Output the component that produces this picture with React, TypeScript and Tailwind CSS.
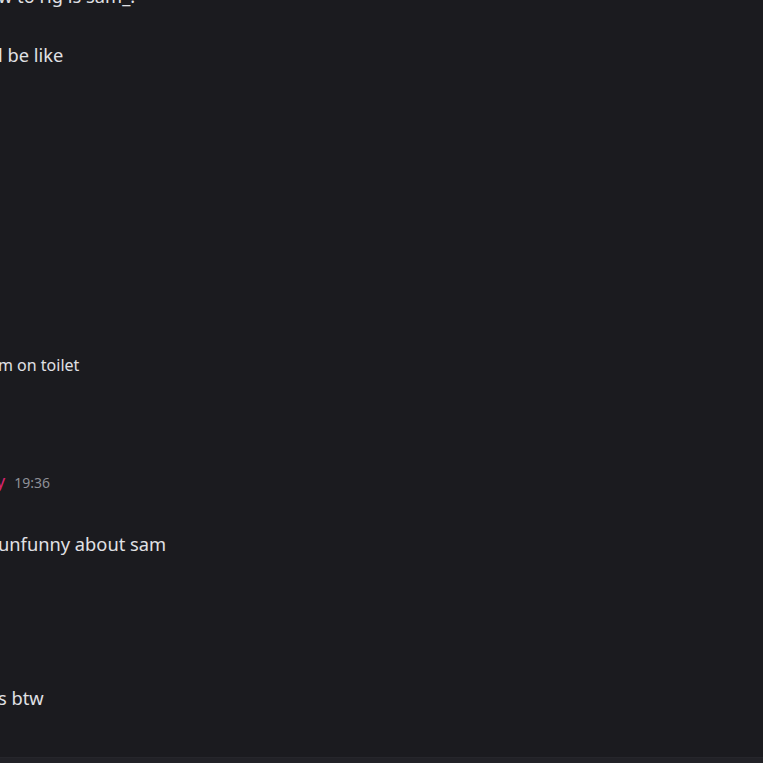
export default function App() {
  const body = "text-[18.3px] leading-[24px] text-[#e0e1e5] whitespace-nowrap";
  return (
    <div
      className="w-[763px] h-[763px] overflow-hidden bg-[#1b1b1f] flex flex-col"
      style={{ fontFamily: '"Noto Sans", "Open Sans", sans-serif' }}
    >
      <div className="flex-1 flex flex-col overflow-hidden">
        {/* tail of the previous message, scrolled mostly out of view */}
        <div className={`${body} mt-[-16px] -ml-[2px]`}>w to rig is sam_.</div>
        <div className={`${body} mt-[35px] -ml-[2px]`}>l be like</div>

        {/* smaller line further down the thread */}
        <div className="text-[16px] leading-[18px] text-[#e0e1e5] whitespace-nowrap mt-[289px] -ml-[2px]">
          m on toilet
        </div>

        {/* next message group header */}
        <div className="flex items-baseline gap-[9px] h-[22px] leading-[22px] mt-[96px] -ml-[4px] whitespace-nowrap">
          <span className="text-[18px] text-[#d6246e]">y</span>
          <span className="text-[14px] text-[#8e9097]">19:36</span>
        </div>
        <div className={`${body} mt-[40px] -ml-[2px]`}>unfunny about sam</div>
        <div className={`${body} mt-[130px] -ml-[2px]`}>s btw</div>
      </div>
      <div className="h-[6px] bg-[#222227] border-t border-[#26262b]" />
    </div>
  );
}
